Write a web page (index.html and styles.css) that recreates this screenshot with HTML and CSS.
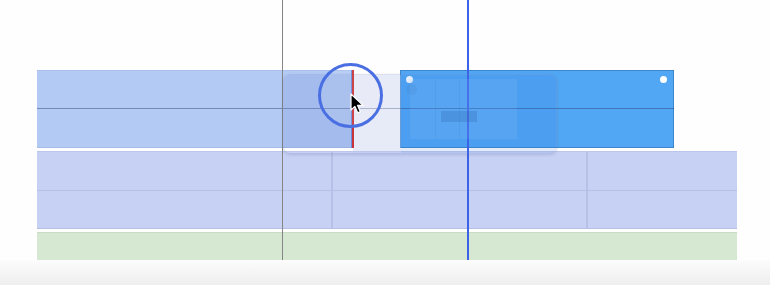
FILE: index.html
```html
<!DOCTYPE html>
<html>
<head>
<meta charset="utf-8">
<link rel="stylesheet" href="styles.css">
</head>
<body>
<div class="stage">
  <div class="row row-top">
    <div class="block block-light"></div>
    <div class="block-gap"></div>
    <div class="block block-blue">
      <span class="handle handle-left"></span>
      <span class="handle handle-right"></span>
    </div>
  </div>
  <div class="row row-mid">
    <div class="cell cell-a"><div class="half"></div><div class="half"></div></div>
    <div class="cell cell-b"><div class="half"></div><div class="half"></div></div>
    <div class="cell cell-c"><div class="half"></div><div class="half"></div></div>
  </div>
  <div class="row row-green"></div>

  <div class="vline vline-gray"></div>
  <div class="vline vline-blue"></div>

  <div class="ghost">
    <div class="ghost-left"></div>
    <div class="ghost-gap"></div>
    <div class="ghost-blue">
      <div class="ghost-card">
        <span class="ghost-dot"></span>
        <span class="ghost-col ghost-col-1"></span>
        <span class="ghost-col ghost-col-2"></span>
        <span class="ghost-chip"></span>
      </div>
    </div>
  </div>

  <div class="drop-line"></div>
  <div class="ring"></div>
  <svg class="cursor" width="15" height="22" viewBox="0 0 15 22">
    <path d="M1 1 L1 17 L4.9 13.4 L7.7 19.8 L10.3 18.6 L7.6 12.4 L13 12.4 Z" fill="#000" stroke="#fff" stroke-width="1.2" stroke-linejoin="round"/>
  </svg>
</div>
<div class="footer"></div>
</body>
</html>
```

FILE: styles.css
```css
html, body {
  margin: 0;
  padding: 0;
  background: #fefefe;
  font-family: "Liberation Sans", Arial, sans-serif;
}

.stage {
  position: relative;
  height: 260px;
  padding: 70px 0 0 37px;
  box-sizing: border-box;
  display: flex;
  flex-direction: column;
  gap: 3px;
  overflow: hidden;
}

.row {
  display: flex;
  flex: none;
}

/* top row */
.row-top {
  position: relative;
  height: 78px;
  width: 637px;
}

.row-top::after {
  content: "";
  position: absolute;
  left: 0;
  right: 0;
  top: 38px;
  height: 1px;
  background: rgba(40, 60, 110, 0.45);
}

.block {
  position: relative;
  height: 78px;
  box-sizing: border-box;
}

.block-light {
  width: 315px;
  background: #b3cbf4;
  border-top: 1px solid #a9c0ec;
  border-bottom: 1px solid #a6bbe6;
}

.block-gap {
  width: 48px;
}

.block-blue {
  width: 274px;
  background: #51a7f4;
  border: 1px solid #3d86cc;
}

.handle {
  position: absolute;
  top: 5px;
  width: 7px;
  height: 7px;
  border-radius: 50%;
  background: #ffffff;
}

.handle-left { left: 5px; }
.handle-right { right: 6px; }

/* middle row */
.row-mid {
  width: 700px;
  height: 78px;
  background: #c7d1f4;
  border-top: 1px solid #bcc6ec;
  border-bottom: 1px solid #b5bfe6;
  box-sizing: border-box;
}

.cell {
  display: flex;
  flex-direction: column;
  box-sizing: border-box;
}

.cell-a { width: 296px; border-right: 2px solid #b7c1e7; }
.cell-b { width: 255px; border-right: 2px solid #b7c1e7; }
.cell-c { width: 149px; }

.half {
  flex: 1;
}

.half:first-child {
  border-bottom: 1px solid #b7c1e7;
}

/* green row */
.row-green {
  width: 700px;
  height: 28px;
  background: #d7e8d2;
  border-top: 1px solid #cbdcc6;
  box-sizing: border-box;
}

/* vertical guide lines */
.vline {
  position: absolute;
  top: 0;
  width: 1px;
  height: 260px;
}

.vline-gray {
  left: 282px;
  background: #858585;
}

.vline-blue {
  left: 467px;
  width: 2px;
  background: #3d62ea;
}

/* drag ghost */
.ghost {
  position: absolute;
  left: 283px;
  top: 74px;
  width: 274px;
  height: 80px;
  border-radius: 7px;
  display: flex;
  overflow: hidden;
  border: 1px solid rgba(120, 135, 190, 0.25);
  box-sizing: border-box;
  box-shadow: 0 1px 3px rgba(60, 70, 120, 0.18);
}

.ghost-left {
  width: 69px;
  height: 73px;
  background: rgba(110, 135, 215, 0.22);
}

.ghost-gap {
  width: 48px;
  background: rgba(190, 198, 235, 0.35);
}

.ghost-blue {
  flex: 1;
  background: rgba(40, 110, 210, 0.12);
  padding: 4px 0 0 9px;
  box-sizing: border-box;
}

.ghost-card {
  position: relative;
  width: 107px;
  height: 60px;
  background: rgba(150, 200, 255, 0.14);
}

.ghost-dot {
  position: absolute;
  left: -4px;
  top: 5px;
  width: 11px;
  height: 11px;
  border-radius: 50%;
  background: rgba(70, 100, 150, 0.1);
}

.ghost-col {
  position: absolute;
  top: 0;
  bottom: 0;
  width: 1px;
  background: rgba(50, 100, 170, 0.1);
}

.ghost-col-1 { left: 25px; }
.ghost-col-2 { left: 49px; }

.ghost-chip {
  position: absolute;
  left: 31px;
  top: 32px;
  width: 36px;
  height: 11px;
  background: rgba(40, 80, 150, 0.2);
}

/* drop indicator */
.drop-line {
  position: absolute;
  left: 351px;
  top: 70px;
  width: 2px;
  height: 78px;
  background: #c7353b;
  border-left: 1px solid #6d8de2;
}

.ring {
  position: absolute;
  left: 318px;
  top: 63px;
  width: 65px;
  height: 65px;
  box-sizing: border-box;
  border-radius: 50%;
  border: 3.5px solid #4a6fe3;
  background: rgba(255, 255, 255, 0.08);
}

.cursor {
  position: absolute;
  left: 350px;
  top: 93px;
}

.footer {
  height: 25px;
  background: linear-gradient(to bottom, #fcfcfc, #eeeeee);
}
```
